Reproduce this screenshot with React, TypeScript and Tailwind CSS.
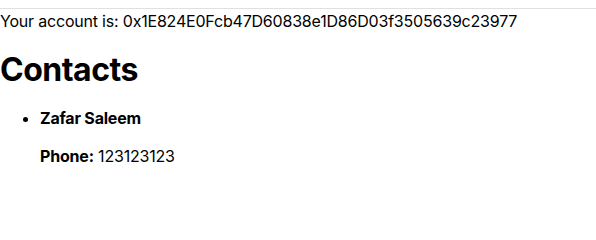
import React from 'react';

const contacts = [{ name: 'Zafar Saleem', phone: '123123123' }];

export default function App() {
    return (
        <div className="font-['Inter',sans-serif] text-base tracking-[-0.2px] text-black bg-white">
            <div className="pt-2">
                <hr className="border-t border-[#e0e0e0]" />
                <p>Your account is: 0x1E824E0Fcb47D60838e1D86D03f3505639c23977</p>
            </div>
            <h1 className="text-[32px] font-bold tracking-[-0.5px] mt-[13px] mb-[12px]">Contacts</h1>
            <ul className="list-disc pl-10">
                {contacts.map((c, i) => (
                    <li key={i}>
                        <p className="font-bold">{c.name}</p>
                        <p className="mt-[14px]">
                            <span className="font-bold">Phone:</span> {c.phone}
                        </p>
                    </li>
                ))}
            </ul>
        </div>
    );
}
